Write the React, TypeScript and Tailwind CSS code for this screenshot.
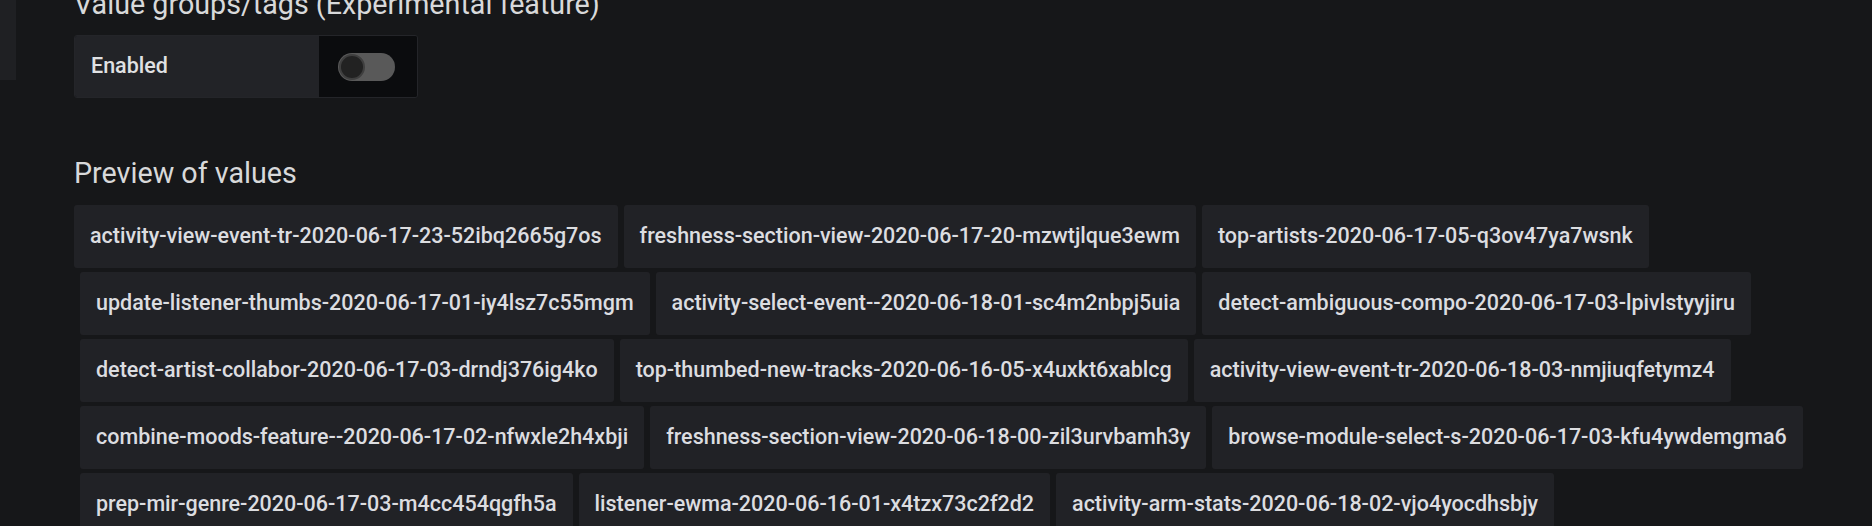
import React from 'react';

const rows: string[][] = [
  [
    'activity-view-event-tr-2020-06-17-23-52ibq2665g7os',
    'freshness-section-view-2020-06-17-20-mzwtjlque3ewm',
    'top-artists-2020-06-17-05-q3ov47ya7wsnk',
  ],
  [
    'update-listener-thumbs-2020-06-17-01-iy4lsz7c55mgm',
    'activity-select-event--2020-06-18-01-sc4m2nbpj5uia',
    'detect-ambiguous-compo-2020-06-17-03-lpivlstyyjiru',
  ],
  [
    'detect-artist-collabor-2020-06-17-03-drndj376ig4ko',
    'top-thumbed-new-tracks-2020-06-16-05-x4uxkt6xablcg',
    'activity-view-event-tr-2020-06-18-03-nmjiuqfetymz4',
  ],
  [
    'combine-moods-feature--2020-06-17-02-nfwxle2h4xbji',
    'freshness-section-view-2020-06-18-00-zil3urvbamh3y',
    'browse-module-select-s-2020-06-17-03-kfu4ywdemgma6',
  ],
  [
    'prep-mir-genre-2020-06-17-03-m4cc454qgfh5a',
    'listener-ewma-2020-06-16-01-x4tzx73c2f2d2',
    'activity-arm-stats-2020-06-18-02-vjo4yocdhsbjy',
  ],
];

function Tag({ value }: { value: string }) {
  return (
    <span className="h-[63px] px-[16px] flex items-center bg-[#212226] rounded-[3px] text-[21.5px] font-medium text-[#dcdde0] whitespace-nowrap">
      {value}
    </span>
  );
}

export default function App() {
  return (
    <div
      className="min-h-screen bg-[#161719] flex overflow-hidden"
      style={{ fontFamily: 'Roboto, "Liberation Sans", sans-serif' }}
    >
      {/* left edge of the side panel */}
      <div className="w-[16px] h-[80px] bg-[#1f2023] shrink-0" />

      <div className="ml-[58px] flex flex-col">
        <h3 className="text-[28.7px] leading-[34px] font-normal text-[#d8d9da] -mt-[13px] mb-[14px]">
          Value groups/tags (Experimental feature)
        </h3>

        {/* toggle row */}
        <div className="flex h-[63px] w-[344px] rounded-[3px] border border-[#242529] overflow-hidden">
          <div className="w-[244px] bg-[#222327] flex items-center pl-[16px] text-[21.5px] font-medium text-[#e0e1e3]">
            Enabled
          </div>
          <div className="flex-1 bg-[#0b0c0e] flex items-center pl-[19px]">
            <div className="w-[57px] h-[28px] rounded-full bg-[#595959] flex items-center pl-[1px]">
              <div className="w-[26px] h-[26px] rounded-full bg-[#222222] border-2 border-[#3f3f3f]" />
            </div>
          </div>
        </div>

        <h3 className="text-[28.7px] leading-[34px] font-normal text-[#d8d9da] mt-[58px] mb-[15px]">
          Preview of values
        </h3>

        <div className="flex flex-col gap-[4px]">
          {rows.map((row, i) => (
            <div key={i} className={i === 0 ? 'flex gap-[6px]' : 'flex gap-[6px] pl-[6px]'}>
              {row.map((v) => (
                <Tag key={v} value={v} />
              ))}
            </div>
          ))}
        </div>
      </div>
    </div>
  );
}
